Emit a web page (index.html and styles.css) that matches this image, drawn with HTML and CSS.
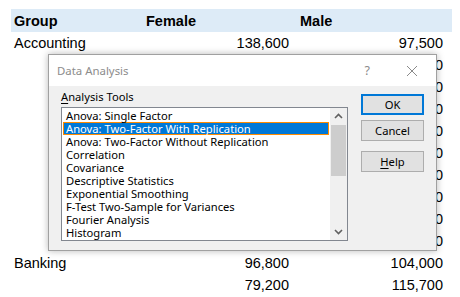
FILE: index.html
```html
<!DOCTYPE html>
<html>
<head>
<meta charset="utf-8">
<link rel="stylesheet" href="styles.css">
</head>
<body>
<div class="sheet">
  <div class="row head">
    <div class="c1">Group</div><div class="c2">Female</div><div class="c3">Male</div>
  </div>
  <div class="row"><div class="c1">Accounting</div><div class="c2 num">138,600</div><div class="c3 num">97,500</div></div>
  <div class="row"><div class="c1"></div><div class="c2 num">88,400</div><div class="c3 num">91,300</div></div>
  <div class="row"><div class="c1"></div><div class="c2 num">76,900</div><div class="c3 num">83,200</div></div>
  <div class="row"><div class="c1"></div><div class="c2 num">99,100</div><div class="c3 num">102,800</div></div>
  <div class="row"><div class="c1"></div><div class="c2 num">84,300</div><div class="c3 num">95,600</div></div>
  <div class="row"><div class="c1"></div><div class="c2 num">71,500</div><div class="c3 num">88,700</div></div>
  <div class="row"><div class="c1"></div><div class="c2 num">92,800</div><div class="c3 num">110,400</div></div>
  <div class="row"><div class="c1"></div><div class="c2 num">81,600</div><div class="c3 num">79,900</div></div>
  <div class="row"><div class="c1"></div><div class="c2 num">105,200</div><div class="c3 num">98,100</div></div>
  <div class="row"><div class="c1"></div><div class="c2 num">87,300</div><div class="c3 num">93,500</div></div>
  <div class="row"><div class="c1">Banking</div><div class="c2 num">96,800</div><div class="c3 num">104,000</div></div>
  <div class="row"><div class="c1"></div><div class="c2 num">79,200</div><div class="c3 num">115,700</div></div>
</div>

<div class="dialog">
  <div class="titlebar">
    <span class="title">Data Analysis</span>
    <span class="help-q">?</span>
    <svg class="close" width="12" height="12" viewBox="0 0 12 12"><path d="M1 1 L11 11 M11 1 L1 11" stroke="#8a8a8a" stroke-width="1" fill="none"/></svg>
  </div>
  <div class="body">
    <div class="left">
      <div class="label"><u>A</u>nalysis Tools</div>
      <div class="listbox">
        <div class="items">
          <div class="item">Anova: Single Factor</div>
          <div class="item sel">Anova: Two-Factor With Replication</div>
          <div class="item">Anova: Two-Factor Without Replication</div>
          <div class="item">Correlation</div>
          <div class="item">Covariance</div>
          <div class="item">Descriptive Statistics</div>
          <div class="item">Exponential Smoothing</div>
          <div class="item">F-Test Two-Sample for Variances</div>
          <div class="item">Fourier Analysis</div>
          <div class="item">Histogram</div>
        </div>
        <div class="scrollbar">
          <svg class="arrow" width="17" height="17" viewBox="0 0 17 17"><path d="M5 10 L8.5 6.5 L12 10" stroke="#606060" stroke-width="1.6" fill="none"/></svg>
          <div class="track"><div class="thumb"></div></div>
          <svg class="arrow" width="17" height="17" viewBox="0 0 17 17"><path d="M5 7 L8.5 10.5 L12 7" stroke="#606060" stroke-width="1.6" fill="none"/></svg>
        </div>
      </div>
    </div>
    <div class="buttons">
      <div class="btn default">OK</div>
      <div class="btn">Cancel</div>
      <div class="btn help"><u>H</u>elp</div>
    </div>
  </div>
</div>
</body>
</html>
```
FILE: styles.css
```css
html, body { margin: 0; padding: 0; background: #fff; }
body { width: 460px; height: 297px; overflow: hidden; position: relative; }

.sheet {
  padding: 9px 0 0 11px;
  font-family: "Liberation Sans", Arial, sans-serif;
  font-size: 14.5px;
  color: #000;
}
.row { display: flex; height: 22px; align-items: center; }
.row.head { height: 23px; background: #ddebf7; width: 441px; font-weight: bold; }
.c1 { width: 132px; padding-left: 3px; box-sizing: border-box; }
.c2 { width: 154px; padding-left: 3px; box-sizing: border-box; }
.c3 { width: 155px; padding-left: 3px; box-sizing: border-box; }
.c2.num { text-align: right; padding-right: 8px; }
.c3.num { text-align: right; padding-right: 9px; }

.dialog {
  position: absolute;
  left: 48px; top: 54px;
  width: 389px; height: 197px;
  box-sizing: border-box;
  border: 1px solid #a0a0a0;
  background: #f0f0f0;
  box-shadow: 0 0 7px rgba(0,0,0,0.28);
  font-family: "Noto Sans", "Open Sans", sans-serif;
  font-size: 11.2px;
  color: #000;
  display: flex; flex-direction: column;
}
.titlebar {
  height: 31px; background: #fff;
  display: flex; align-items: center;
  padding-left: 8px;
}
.title { color: #8c8c8c; font-size: 11.4px; flex: 1; }
.help-q { color: #8c8c8c; font-size: 12.5px; margin-right: 36px; }
.close { margin-right: 18px; }

.body { display: flex; flex: 1; padding: 0 12px 0 12px; }
.left { width: 288px; }
.label { height: 21px; padding-top: 3px; box-sizing: border-box; line-height: 16px; }
.label u, .btn u { text-decoration: underline; text-underline-offset: 2px; }
.listbox {
  height: 134px; box-sizing: border-box;
  border: 1px solid #828790;
  background: #fff;
  display: flex;
}
.items { flex: 1; padding: 1px 1px 0 1px; }
.item { height: 13px; line-height: 13px; padding-left: 3px; white-space: nowrap; box-sizing: border-box; }
.item.sel { background: #0078d7; color: #fff; border: 1px solid #ff8c00; padding-left: 2px; line-height: 11px; }
.scrollbar { width: 17px; background: #f0f0f0; display: flex; flex-direction: column; }
.arrow { display: block; flex: none; }
.track { flex: 1; }
.thumb { margin: 0 1px; height: 51px; background: #cdcdcd; }

.buttons { margin-left: 13px; padding-top: 8px; display: flex; flex-direction: column; }
.btn {
  width: 63px; height: 21px; box-sizing: border-box;
  border: 1px solid #adadad; background: #e1e1e1;
  display: flex; align-items: center; justify-content: center;
  margin-bottom: 5px;
}
.btn.default { border: 2px solid #0078d7; }
.btn.help { margin-top: 5px; }
```
